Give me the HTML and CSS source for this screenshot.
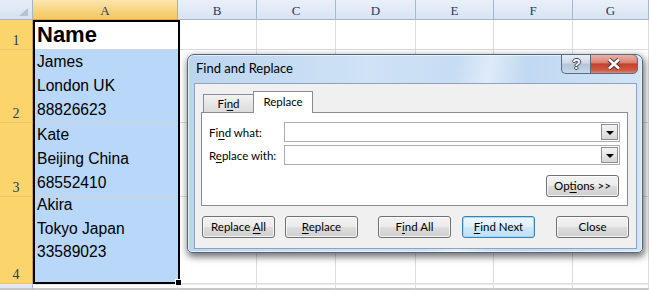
FILE: index.html
```html
<!DOCTYPE html>
<html>
<head>
<meta charset="utf-8">
<title>Find and Replace</title>
<link rel="stylesheet" href="styles.css">
</head>
<body>
<div class="sheet">
  <div class="corner"><span class="tri"></span></div>
  <div class="ch sel">A</div>
  <div class="ch">B</div>
  <div class="ch">C</div>
  <div class="ch">D</div>
  <div class="ch">E</div>
  <div class="ch">F</div>
  <div class="ch">G</div>

  <div class="rh sel">1</div>
  <div class="c a active"><div class="name">Name</div></div>
  <div class="c"></div><div class="c"></div><div class="c"></div><div class="c"></div><div class="c"></div><div class="c"></div>

  <div class="rh sel">2</div>
  <div class="c a"><div class="lines"><div>James</div><div>London UK</div><div>88826623</div></div></div>
  <div class="c"></div><div class="c"></div><div class="c"></div><div class="c"></div><div class="c"></div><div class="c"></div>

  <div class="rh sel">3</div>
  <div class="c a"><div class="lines"><div>Kate</div><div>Beijing China</div><div>68552410</div></div></div>
  <div class="c"></div><div class="c"></div><div class="c"></div><div class="c"></div><div class="c"></div><div class="c"></div>

  <div class="rh sel">4</div>
  <div class="c a"><div class="lines up"><div>Akira</div><div>Tokyo Japan</div><div>33589023</div></div></div>
  <div class="c"></div><div class="c"></div><div class="c"></div><div class="c"></div><div class="c"></div><div class="c"></div>

  <div class="rh last"></div>
  <div class="c last"></div><div class="c last"></div><div class="c last"></div><div class="c last"></div><div class="c last"></div><div class="c last"></div><div class="c last"></div>

  <div class="selection"><span class="handle"></span></div>

  <div class="dialog">
    <div class="title">Find and Replace</div>
    <div class="capbtn help"><span>?</span></div>
    <div class="capbtn close">
      <svg width="14" height="12" viewBox="0 0 14 12">
        <path d="M2 1.5 L12 10.5 M12 1.5 L2 10.5" stroke="#4a3030" stroke-width="4.4" fill="none"/>
        <path d="M2 1.5 L12 10.5 M12 1.5 L2 10.5" stroke="#ffffff" stroke-width="2.6" fill="none"/>
      </svg>
    </div>
    <div class="client">
      <div class="tabs">
        <div class="tab">Fi<u>n</u>d</div>
        <div class="tab active">Replace</div>
      </div>
      <div class="panel">
        <div class="field">
          <span class="label">Fi<u>n</u>d what:</span>
          <div class="combo"><span class="drop"><span class="arrow"></span></span></div>
        </div>
        <div class="field">
          <span class="label">R<u>e</u>place with:</span>
          <div class="combo"><span class="drop"><span class="arrow"></span></span></div>
        </div>
        <div class="optrow">
          <button class="btn">Op<u>t</u>ions &gt;&gt;</button>
        </div>
      </div>
      <div class="buttons">
        <button class="btn">Replace <u>A</u>ll</button>
        <button class="btn g10"><u>R</u>eplace</button>
        <button class="btn g20">F<u>i</u>nd All</button>
        <button class="btn g11 default"><u>F</u>ind Next</button>
        <button class="btn g21">Close</button>
      </div>
    </div>
  </div>
</div>
</body>
</html>
```

FILE: styles.css
```css
html, body {
  margin: 0;
  padding: 0;
  background: #ffffff;
}
body {
  width: 649px;
  height: 290px;
  overflow: hidden;
  font-family: "Liberation Sans", Arial, sans-serif;
}

.sheet {
  position: relative;
  display: grid;
  grid-template-columns: 33px 145px 79px 79px 80px 78px 79px 76px;
  grid-template-rows: 20px 30px 73px 74px 87px 6px;
  width: 649px;
  height: 290px;
}

.sheet > div {
  box-sizing: border-box;
}

.corner {
  position: relative;
  background: linear-gradient(#e6edf7, #d7e2f0);
  border-right: 1px solid #9eb6ce;
  border-bottom: 1px solid #9eb6ce;
}
.tri {
  position: absolute;
  right: 4px;
  bottom: 3px;
  width: 0;
  height: 0;
  border-left: 9px solid transparent;
  border-bottom: 8px solid #b4c4d6;
}

.ch {
  display: flex;
  align-items: center;
  justify-content: center;
  background: linear-gradient(#e9f0f9, #d9e4f2);
  border-right: 1px solid #a3b9d3;
  border-bottom: 1px solid #9eb6ce;
  font-family: "Liberation Serif", "DejaVu Serif", serif;
  font-size: 13px;
  color: #1f3a68;
  padding-top: 2px;
}
.ch.sel {
  background: linear-gradient(#fbe6b0, #f7d27a 60%, #f4c865);
  border-right-color: #d8aa4f;
  border-bottom-color: #e2a33c;
}

.rh {
  display: flex;
  align-items: flex-end;
  justify-content: center;
  background: linear-gradient(#e9f0f9, #d9e4f2);
  border-right: 1px solid #9eb6ce;
  border-bottom: 1px solid #9eb6ce;
  font-family: "Liberation Serif", "DejaVu Serif", serif;
  font-size: 14px;
  line-height: 14px;
  color: #1f3a68;
  padding-bottom: 1px;
}
.rh.sel {
  background: #fbd56c;
  border-right-color: #c9a04a;
  border-bottom-color: #e8c66c;
}

.c {
  border-right: 1px solid #dadcdd;
  border-bottom: 1px solid #dadcdd;
  background: #ffffff;
}
.c.a {
  background: #b8d7f9;
  border-bottom-color: #d3d3d3;
  border-right: none;
  padding-left: 4px;
  overflow: visible;
  color: #000;
}
.c.a.active {
  background: #ffffff;
}
.c.last, .rh.last {
  border-bottom: 2px solid #c8c8c8;
  border-top: 1px solid #ebebeb;
}
.rh.last {
  background: #dfe8f4;
  padding: 0;
}

.name {
  font-weight: bold;
  font-size: 22px;
  line-height: 30px;
}
.lines {
  font-size: 15.6px;
  line-height: 24px;
}
.lines.up {
  margin-top: -4px;
  line-height: 23.5px;
}

.selection {
  position: absolute;
  left: 33px;
  top: 20px;
  width: 147px;
  height: 264px;
  box-sizing: border-box;
  border: 2px solid #000;
  pointer-events: none;
}
.handle {
  position: absolute;
  right: -4px;
  bottom: -4px;
  width: 5px;
  height: 5px;
  background: #000;
  border: 1px solid #fff;
}

/* dialog */
.dialog {
  position: absolute;
  left: 187px;
  top: 54px;
  width: 456px;
  height: 199px;
  box-sizing: border-box;
  display: flex;
  flex-direction: column;
  padding: 0 5px 3px 6px;
  border: 1px solid #55667a;
  border-radius: 7px 7px 5px 5px;
  background:
    linear-gradient(100deg, rgba(255,255,255,0) 55%, rgba(255,255,255,.45) 62%, rgba(255,255,255,0) 70%),
    linear-gradient(to right, #bcd5ef, #cfe2f6 40%, #c0d8f1 75%, #d2e4f7);
  box-shadow: inset 0 0 0 1px rgba(255,255,255,.55), 1px 3px 7px 1px rgba(0,0,0,.55);
  font-family: Lato, "Noto Sans", sans-serif;
}
.title {
  height: 28px;
  box-sizing: border-box;
  padding: 5px 0 0 2px;
  font-size: 13px;
  line-height: 16px;
  color: #000;
}
.capbtn {
  position: absolute;
  top: -1px;
  height: 20px;
  box-sizing: border-box;
  border: 1px solid #5a6b80;
  display: flex;
  align-items: center;
  justify-content: center;
}
.help {
  left: 373px;
  width: 30px;
  border-right: none;
  border-radius: 0 0 0 5px;
  background: linear-gradient(#e6edf6, #cdd9e8 45%, #b3c4d8 50%, #c8d7e9);
}
.help span {
  font-family: "Liberation Sans", Arial, sans-serif;
  font-weight: bold;
  font-size: 14px;
  line-height: 14px;
  color: #fff;
  text-shadow: 0 0 1px #2e3e52, 1px 0 0 #3c4b5e, -1px 0 0 #3c4b5e, 0 1px 0 #3c4b5e, 0 -1px 0 #3c4b5e;
}
.close {
  left: 402px;
  width: 48px;
  border-radius: 0 6px 5px 0;
  background: linear-gradient(#eab2a5, #d98474 42%, #c4412c 50%, #cf5a44 85%, #dc8a74);
}

.client {
  flex: 1;
  box-sizing: border-box;
  background: #f0f0f0;
  border: 1px solid #8da4c0;
  padding: 7px 0 0 0;
  display: flex;
  flex-direction: column;
  font-size: 11.5px;
  color: #000;
}
.tabs {
  display: flex;
  align-items: flex-end;
  height: 21px;
  margin-left: 8px;
  position: relative;
  z-index: 1;
}
.tab {
  box-sizing: border-box;
  height: 18px;
  width: 50px;
  border: 1px solid #898c95;
  border-bottom: none;
  border-right: none;
  background: linear-gradient(#f3f3f3, #e4e4e4 60%, #dcdcdc);
  text-align: center;
  line-height: 17px;
}
.tab.active {
  height: 22px;
  width: 60px;
  margin-bottom: -1px;
  background: #ffffff;
  border-right: 1px solid #898c95;
  line-height: 20px;
}
.panel {
  box-sizing: border-box;
  margin-left: 6px;
  width: 427px;
  height: 94px;
  background: #ffffff;
  border: 1px solid #898c95;
  padding: 9px 7px 0 7px;
  display: flex;
  flex-direction: column;
}
.field {
  display: flex;
  align-items: center;
  height: 20px;
  margin-bottom: 3px;
}
.label {
  width: 75px;
  flex: none;
}
.combo {
  box-sizing: border-box;
  width: 336px;
  height: 20px;
  border: 1px solid #abadb3;
  background: #fff;
  display: flex;
  justify-content: flex-end;
  padding: 1px;
}
.drop {
  box-sizing: border-box;
  width: 17px;
  height: 100%;
  border: 1px solid #8e8f8f;
  background: linear-gradient(#f4f4f4, #e6e6e6 50%, #d6d6d6);
  display: flex;
  align-items: center;
  justify-content: center;
}
.arrow {
  width: 0;
  height: 0;
  border-left: 4px solid transparent;
  border-right: 4px solid transparent;
  border-top: 4px solid #000;
  margin-top: 1px;
}
.optrow {
  display: flex;
  justify-content: flex-end;
  margin-top: 7px;
  padding-right: 1px;
}

.btn {
  box-sizing: border-box;
  width: 73px;
  height: 22px;
  padding: 0;
  border: 1px solid #707070;
  border-radius: 3px;
  background: linear-gradient(#f2f2f2, #ebebeb 50%, #dddddd 51%, #cfcfcf);
  box-shadow: inset 0 0 0 1px rgba(255,255,255,.75);
  font-family: Lato, "Noto Sans", sans-serif;
  font-size: 11.5px;
  color: #000;
  line-height: 18px;
}
.btn.default {
  border-color: #3c7fb1;
  box-shadow: inset 0 0 0 1px #9fdcf6;
  background: linear-gradient(#eaf6fd, #e0f0fb 50%, #cfe8f9 51%, #bfe0f6);
}
.buttons {
  display: flex;
  margin: 10px 0 0 7px;
}
.g10 { margin-left: 10px; }
.g20 { margin-left: 20px; }
.g11 { margin-left: 11px; }
.g21 { margin-left: 21px; }

u {
  text-decoration: underline;
  text-underline-offset: 2px;
}
```
